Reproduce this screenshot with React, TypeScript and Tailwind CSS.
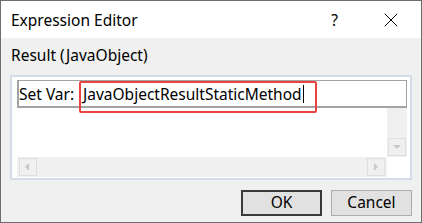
import { X } from 'lucide-react';

function ScrollArrow({ dir }: { dir: 'left' | 'right' | 'down' }) {
    const points =
        dir === 'left' ? '10,5 10,13 6,9' : dir === 'right' ? '7,5 7,13 11,9' : '5,7 13,7 9,11';
    return (
        <div className="w-[18px] h-[18px] border border-[#dedede] bg-[#f0f0f0]">
            <svg width="16" height="16" viewBox="0 0 16 16" className="-mt-px -ml-px">
                <polygon points={points} fill="#c8c8c8" />
            </svg>
        </div>
    );
}

export default function App() {
    return (
        <div className="w-[422px] h-[223px] border border-[#6e6e6e] bg-[#f0f0f0] flex flex-col font-['Segoe_UI','Noto_Sans',sans-serif] text-[15.5px] text-black leading-[20px]">
            {/* title bar */}
            <div className="h-[37px] shrink-0 bg-white flex items-center pl-[10px] pr-[18px]">
                <span className="flex-1">Expression Editor</span>
                <span>?</span>
                <X size={24} strokeWidth={1} className="ml-[41px]" />
            </div>

            <div className="flex-1 flex flex-col px-[9px]">
                <div className="mt-[7px] mb-[10px] pl-px">Result (JavaObject)</div>

                {/* expression box */}
                <div className="relative h-[105px] border-2 border-[#d4dbe9] bg-white pt-[3px] pl-[5px] pr-[3px] flex flex-col">
                    <div className="h-[28px] shrink-0 flex items-center border-t border-r border-l-2 border-b-2 border-[#a3a3a3]">
                        <span className="w-[64px] shrink-0">Set Var:</span>
                        <span>JavaObjectResultStaticMethod</span>
                        <span className="ml-px w-px h-[18px] bg-black" />
                    </div>
                    <div className="h-[49px] shrink-0 flex">
                        <div className="flex-1" />
                        <div className="w-[20px] bg-[#f0f0f0] flex flex-col justify-end items-center pb-px">
                            <ScrollArrow dir="down" />
                        </div>
                    </div>
                    <div className="h-[20px] shrink-0 flex">
                        <div className="flex-1 bg-[#f0f0f0] flex items-center justify-between px-[2px]">
                            <ScrollArrow dir="left" />
                            <ScrollArrow dir="right" />
                        </div>
                        <div className="w-[20px]" />
                    </div>
                    {/* red highlight */}
                    <div className="absolute left-[67px] top-[4px] w-[238px] h-[32px] border-2 border-[#ea4343] rounded-[2px]" />
                </div>

                <div className="mt-[10px] flex justify-end gap-[9px]">
                    <button className="w-[81px] h-[26px] border-2 border-[#3a3a3a] bg-[#e1e1e1] leading-none">OK</button>
                    <button className="w-[81px] h-[26px] border border-[#adadad] bg-[#e1e1e1] leading-none">Cancel</button>
                </div>
            </div>
        </div>
    );
}
